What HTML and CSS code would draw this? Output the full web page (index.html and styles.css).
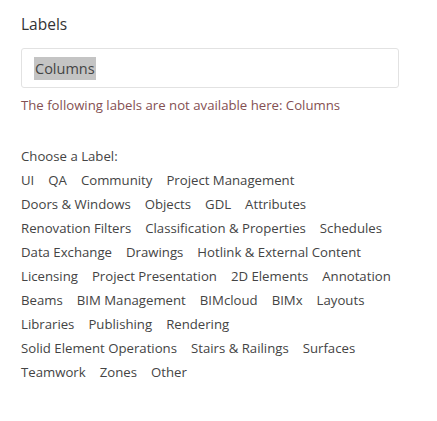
FILE: index.html
```html
<!DOCTYPE html>
<html>
<head>
<meta charset="utf-8">
<link rel="stylesheet" href="styles.css">
</head>
<body>
<div class="panel">
  <div class="title">Labels</div>
  <div class="input"><span class="sel">Columns</span></div>
  <div class="error">The following labels are not available here: Columns</div>
  <div class="choose">Choose a Label:</div>
  <div class="tags">
    <div class="row"><span>UI</span><span>QA</span><span>Community</span><span>Project Management</span></div>
    <div class="row"><span>Doors &amp; Windows</span><span>Objects</span><span>GDL</span><span>Attributes</span></div>
    <div class="row"><span>Renovation Filters</span><span>Classification &amp; Properties</span><span>Schedules</span></div>
    <div class="row"><span>Data Exchange</span><span>Drawings</span><span>Hotlink &amp; External Content</span></div>
    <div class="row"><span>Licensing</span><span>Project Presentation</span><span>2D Elements</span><span>Annotation</span></div>
    <div class="row"><span>Beams</span><span>BIM Management</span><span>BIMcloud</span><span>BIMx</span><span>Layouts</span></div>
    <div class="row"><span>Libraries</span><span>Publishing</span><span>Rendering</span></div>
    <div class="row"><span>Solid Element Operations</span><span>Stairs &amp; Railings</span><span>Surfaces</span></div>
    <div class="row"><span>Teamwork</span><span>Zones</span><span>Other</span></div>
  </div>
</div>
</body>
</html>
```
FILE: styles.css
```css
html, body { margin: 0; padding: 0; background: #fff; }
body { font-family: "Open Sans", "Liberation Sans", sans-serif; color: #444; }
.panel { padding: 14px 21px 0 21px; width: 378px; }
.title { font-size: 15.5px; line-height: 20px; color: #333; }
.input { margin-top: 14px; height: 38px; border: 1px solid #e2e2e2; border-radius: 3px; display: flex; align-items: center; padding-left: 12px; }
.sel { background: #c4c4c4; color: #444; font-size: 14.5px; line-height: 23px; padding: 0 1px; }
.error { margin-top: 8px; font-size: 13.2px; line-height: 18px; color: #845052; }
.choose { margin-top: 33px; font-size: 13.2px; line-height: 18px; color: #444; }
.tags { margin-top: 3px; font-size: 13.2px; line-height: 24px; }
.row { display: flex; column-gap: 14px; white-space: nowrap; }
```
